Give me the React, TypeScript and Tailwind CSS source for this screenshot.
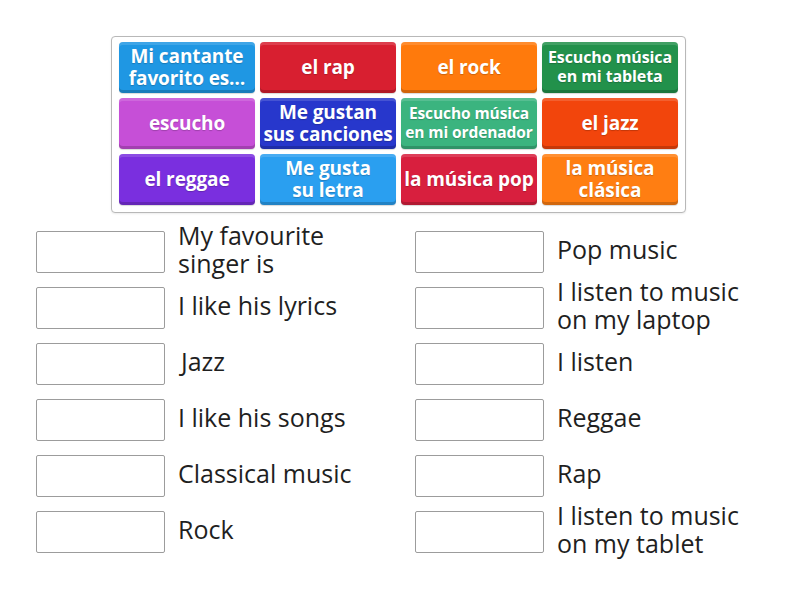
import React from "react";

type Tile = { lines: string[]; bg: string; size: string };

const tiles: Tile[] = [
  { lines: ["Mi cantante", "favorito es…"], bg: "bg-[#1f97e3]", size: "text-[19px] leading-[22px]" },
  { lines: ["el rap"], bg: "bg-[#d81f30]", size: "text-[19px] leading-[22px]" },
  { lines: ["el rock"], bg: "bg-[#ff7a0c]", size: "text-[19px] leading-[22px]" },
  { lines: ["Escucho música", "en mi tableta"], bg: "bg-[#22914b]", size: "text-[16px] leading-[19px]" },
  { lines: ["escucho"], bg: "bg-[#c64fd7]", size: "text-[19px] leading-[22px]" },
  { lines: ["Me gustan", "sus canciones"], bg: "bg-[#2737cc]", size: "text-[19px] leading-[22px]" },
  { lines: ["Escucho música", "en mi ordenador"], bg: "bg-[#3bb47f]", size: "text-[15.5px] leading-[19px]" },
  { lines: ["el jazz"], bg: "bg-[#f2450c]", size: "text-[19px] leading-[22px]" },
  { lines: ["el reggae"], bg: "bg-[#7a2fdf]", size: "text-[19px] leading-[22px]" },
  { lines: ["Me gusta", "su letra"], bg: "bg-[#2a9ff0]", size: "text-[19px] leading-[22px]" },
  { lines: ["la música pop"], bg: "bg-[#d81f3e]", size: "text-[19px] leading-[22px]" },
  { lines: ["la música", "clásica"], bg: "bg-[#ff7e12]", size: "text-[19px] leading-[22px]" },
];

const left = [
  "My favourite singer is",
  "I like his lyrics",
  " Jazz",
  "I like his songs",
  "Classical music",
  "Rock",
];

const right = [
  "Pop music",
  "I listen to music on my laptop",
  "I listen",
  "Reggae",
  "Rap",
  "I listen to music on my tablet",
];

function TileCard({ tile }: { tile: Tile }) {
  return (
    <div
      className={`${tile.bg} ${tile.size} flex h-[51px] items-center justify-center whitespace-nowrap rounded-[4px] pb-[2px] text-center font-bold tracking-[-0.1px] text-white shadow-[inset_0_-3px_0_rgba(0,0,0,0.18),inset_0_3px_0_rgba(255,255,255,0.14),0_1px_1px_rgba(0,0,0,0.15)] [text-shadow:0_1px_1px_rgba(0,0,0,0.2)]`}
    >
      <p>
        {tile.lines.map((l, i) => (
          <React.Fragment key={l}>
            {i > 0 && <br />}
            {l}
          </React.Fragment>
        ))}
      </p>
    </div>
  );
}

function AnswerRow({ label }: { label: string }) {
  const indent = label.startsWith(" ");
  return (
    <div className="flex h-[42px] items-center">
      <div className="h-[42px] w-[129px] shrink-0 rounded-[2px] border border-[#9c9c9c] bg-white" />
      <div
        className={`ml-[13px] w-[215px] pb-[6px] text-[25px] leading-[28px] text-[#1f1f1f] ${
          indent ? "pl-[3px]" : ""
        }`}
      >
        {label.trim()}
      </div>
    </div>
  );
}

export default function App() {
  return (
    <div
      className="h-[600px] w-[800px] bg-white"
      style={{ fontFamily: '"Open Sans", "Liberation Sans", sans-serif' }}
    >
      <div className="pl-[111px] pt-[36px]">
        <div className="grid w-[575px] grid-cols-4 gap-[5px] rounded-[4px] border border-[#b8b8b8] bg-white px-[7px] pb-[7px] pt-[5px] shadow-[0_1px_2px_rgba(0,0,0,0.08)]">
          {tiles.map((t) => (
            <TileCard key={t.lines.join(" ")} tile={t} />
          ))}
        </div>
      </div>
      <div className="mt-[18px] flex pl-[36px]">
        <div className="flex w-[379px] flex-col gap-[14px]">
          {left.map((l) => (
            <AnswerRow key={l} label={l} />
          ))}
        </div>
        <div className="flex w-[379px] flex-col gap-[14px]">
          {right.map((l) => (
            <AnswerRow key={l} label={l} />
          ))}
        </div>
      </div>
    </div>
  );
}
